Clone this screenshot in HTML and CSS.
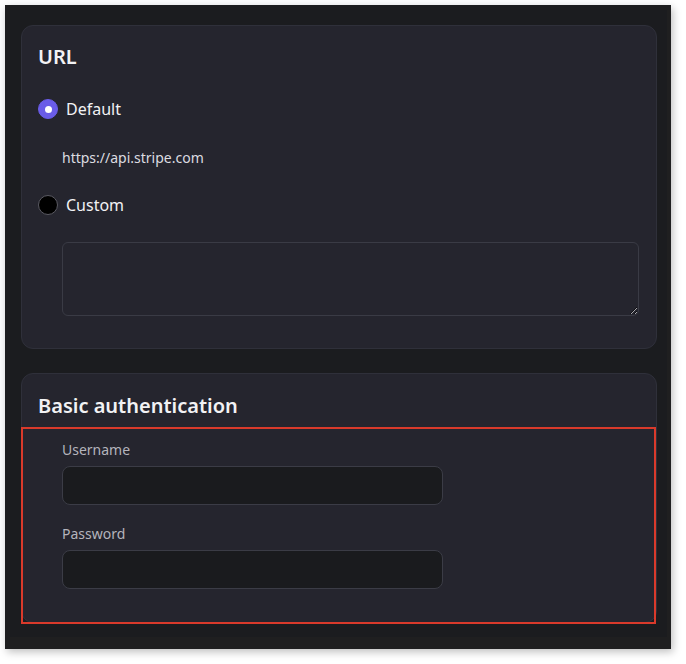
FILE: index.html
```html
<!DOCTYPE html>
<html>
<head>
<meta charset="utf-8">
<link rel="stylesheet" href="styles.css">
</head>
<body>
<div class="frame">
  <div class="panel">
    <section class="card">
      <h2 class="card-title">URL</h2>
      <label class="radio-row first">
        <span class="radio checked"></span>
        <span class="radio-label">Default</span>
      </label>
      <div class="url-text">https://api.stripe.com</div>
      <label class="radio-row">
        <span class="radio"></span>
        <span class="radio-label">Custom</span>
      </label>
      <textarea class="url-input"></textarea>
    </section>
    <section class="card auth">
      <h2 class="card-title">Basic authentication</h2>
      <div class="fields">
        <div class="field">
          <div class="field-label">Username</div>
          <input class="text-input" type="text">
        </div>
        <div class="field">
          <div class="field-label">Password</div>
          <input class="text-input" type="password">
        </div>
      </div>
      <div class="highlight"></div>
    </section>
  </div>
</div>
</body>
</html>
```
FILE: styles.css
```css
* { box-sizing: border-box; }
html, body { margin: 0; padding: 0; background: #ffffff; }
body {
  font-family: "Noto Sans", "Open Sans", sans-serif;
  width: 686px;
  height: 664px;
  padding: 5px;
}
.frame {
  width: 666px;
  height: 644px;
  background: #1f1f20;
  padding: 5px 4px 12px 5px;
  box-shadow: 2px 3px 8px rgba(0, 0, 0, 0.25);
}
.panel {
  background: #1b1c1f;
  height: 100%;
  padding: 15px 10px 0 11px;
  display: flex;
  flex-direction: column;
  gap: 24px;
}
.card {
  background: #25252e;
  border: 1px solid #2f303a;
  border-radius: 12px;
  padding: 17px 17px 32px 16px;
  display: flex;
  flex-direction: column;
}
.card-title {
  margin: 0;
  font-size: 20px;
  line-height: 28px;
  font-weight: 600;
  color: #f2f2f4;
}
.radio-row {
  display: flex;
  align-items: center;
  gap: 8px;
  height: 24px;
  margin-top: 25px;
}
.radio-row.first { margin-top: 26px; }
.radio {
  width: 20px;
  height: 20px;
  border-radius: 50%;
  background: #000000;
  border: 1px solid #5a5a62;
  display: flex;
  align-items: center;
  justify-content: center;
}
.radio.checked {
  background: #6a5ce8;
  border-color: #6a5ce8;
}
.radio.checked::after {
  content: "";
  width: 7px;
  height: 7px;
  border-radius: 50%;
  background: #ffffff;
}
.radio-label {
  font-size: 16px;
  line-height: 24px;
  color: #f2f2f4;
}
.url-text {
  margin-top: 27px;
  margin-left: 24px;
  font-size: 14px;
  line-height: 20px;
  color: #dcdce0;
}
.url-input {
  margin: 25px 0 0 24px;
  height: 74px;
  width: 577px;
  background: #25252e;
  border: 1px solid #3a3b45;
  border-radius: 6px;
  color: #f2f2f4;
  font-family: inherit;
  font-size: 14px;
  resize: vertical;
}
.auth {
  position: relative;
  padding-top: 18px;
  padding-bottom: 33px;
}
.fields {
  margin-top: 20px;
  margin-left: 24px;
  display: flex;
  flex-direction: column;
  gap: 19px;
}
.field {
  display: flex;
  flex-direction: column;
  gap: 6px;
}
.field-label {
  font-size: 14px;
  line-height: 20px;
  color: #b4b4bc;
}
.text-input {
  width: 381px;
  height: 39px;
  background: #1a1b1e;
  border: 1px solid #3b3c46;
  border-radius: 8px;
  color: #f2f2f4;
}
.highlight {
  position: absolute;
  left: -1px;
  right: 0;
  top: 53px;
  bottom: -2px;
  border: 2px solid #d93a2b;
  pointer-events: none;
}
```
